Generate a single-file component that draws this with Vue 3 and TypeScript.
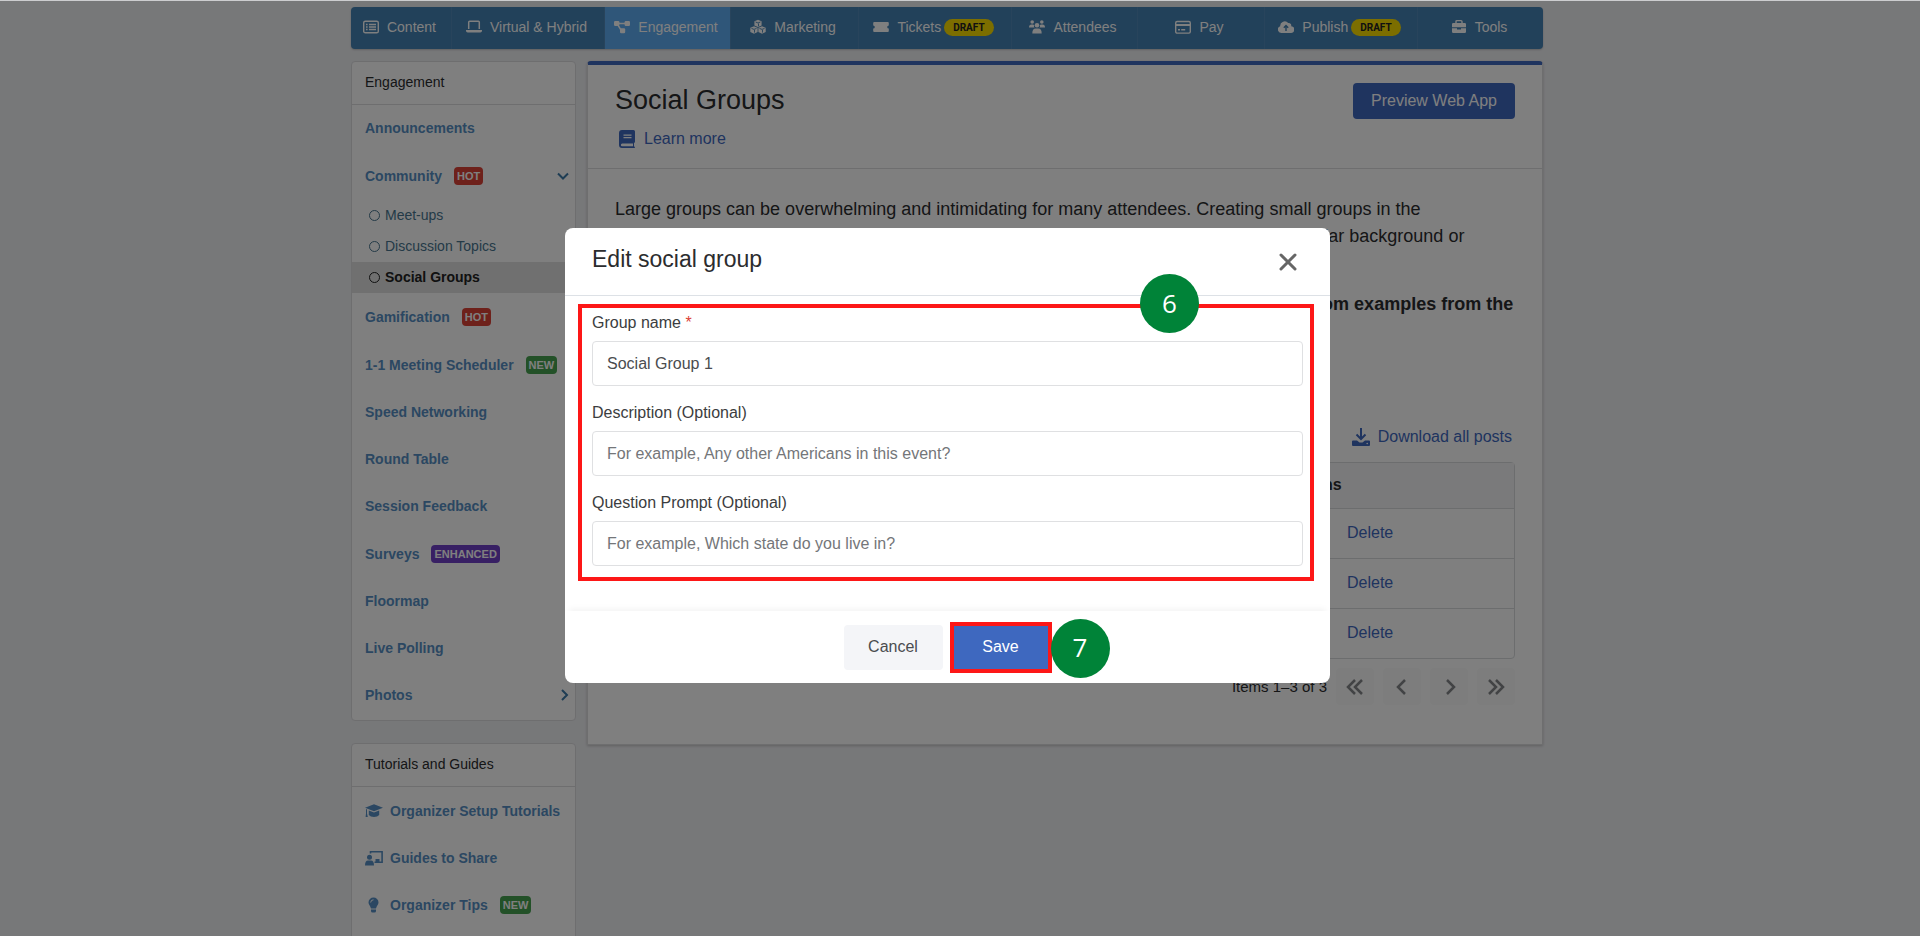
<script setup lang="ts">
import { ref } from 'vue'

interface NavItem { label: string; icon: string; draft?: boolean; active?: boolean }
interface Badge { text: string; kind: string }
interface SideItem { label: string; badge?: Badge; chevron?: 'down' | 'right'; children?: { label: string; active?: boolean }[] }

const nav: NavItem[] = [
  { label: 'Content', icon: 'list' },
  { label: 'Virtual & Hybrid', icon: 'laptop' },
  { label: 'Engagement', icon: 'nodes', active: true },
  { label: 'Marketing', icon: 'cubes' },
  { label: 'Tickets', icon: 'ticket', draft: true },
  { label: 'Attendees', icon: 'people' },
  { label: 'Pay', icon: 'card' },
  { label: 'Publish', icon: 'cloud', draft: true },
  { label: 'Tools', icon: 'toolbox' },
]

const side: SideItem[] = [
  { label: 'Announcements' },
  {
    label: 'Community',
    badge: { text: 'HOT', kind: 'hot' },
    chevron: 'down',
    children: [{ label: 'Meet-ups' }, { label: 'Discussion Topics' }, { label: 'Social Groups', active: true }],
  },
  { label: 'Gamification', badge: { text: 'HOT', kind: 'hot' } },
  { label: '1-1 Meeting Scheduler', badge: { text: 'NEW', kind: 'new' } },
  { label: 'Speed Networking' },
  { label: 'Round Table' },
  { label: 'Session Feedback' },
  { label: 'Surveys', badge: { text: 'ENHANCED', kind: 'enhanced' } },
  { label: 'Floormap' },
  { label: 'Live Polling' },
  { label: 'Photos', chevron: 'right' },
]

const guides = [
  { label: 'Organizer Setup Tutorials', icon: 'cap' },
  { label: 'Guides to Share', icon: 'board' },
  { label: 'Organizer Tips', icon: 'bulb', isNew: true },
]

const groups = ['Social Group 1', 'Social Group 2', 'Social Group 3']
const pages = [
  { name: 'First page', d: 'M9 2 2 9l7 7M16 2 9 9l7 7' },
  { name: 'Previous page', d: 'M12 2 5 9l7 7' },
  { name: 'Next page', d: 'M7 2l7 7-7 7' },
  { name: 'Last page', d: 'M2 2l7 7-7 7M9 2l7 7-7 7' },
]

const groupName = ref('Social Group 1')
const description = ref('')
const prompt = ref('')
</script>

<template>
  <div class="page">
    <div class="container">
      <nav class="topnav">
        <a v-for="n in nav" :key="n.label" href="#" :class="{ active: n.active }">
          <svg class="nav-icon" viewBox="0 0 16 16" aria-hidden="true">
            <g v-if="n.icon === 'list'" fill="none" stroke="currentColor" stroke-width="1.4">
              <rect x=".7" y="2.2" width="14.6" height="11.6" rx="1.6" />
              <path d="M6 5.5h7M6 8h7M6 10.5h7M3 5.5h1.6M3 8h1.6M3 10.5h1.6" />
            </g>
            <g v-else-if="n.icon === 'laptop'">
              <path d="M2.7 10V3.2q0-.9.9-.9h8.8q.9 0 .9.9V10" fill="none" stroke="currentColor" stroke-width="1.5" />
              <path d="M0 11h16v.8q0 1.7-1.7 1.7H1.7Q0 13.5 0 11.8z" fill="currentColor" />
            </g>
            <g v-else-if="n.icon === 'nodes'" fill="currentColor">
              <rect x="0" y="2" width="5.4" height="5" rx="1.2" />
              <rect x="10.6" y="2" width="5.4" height="5" rx="1.2" />
              <rect x="6" y="9.3" width="5.2" height="5" rx="1.2" />
              <path d="M5 3.7h6v1.5H5zM3.3 6.500l1.300-.7 3 4.700-1.300.7z" />
            </g>
            <g v-else-if="n.icon === 'cubes'" fill="currentColor">
              <path d="M8 .8l3.6 1.5v4.2L8 8.100 4.400 6.500V2.300zM4 7.200l3.600 1.500v4.400L4 14.700.3 13.100V8.700zM12 7.200l3.700 1.500v4.400L12 14.700l-3.600-1.600V8.700z" />
              <path d="M5.600 3l2.400 1 2.400-1M1.500 9.400L4 10.400l2.500-1M9.500 9.400l2.500 1 2.500-1M8.500 4.500v2.700M4.500 11v2.600M12.500 11v2.600" fill="none" stroke="#4482b4" stroke-width=".9" />
            </g>
            <path v-else-if="n.icon === 'ticket'" fill="currentColor" d="M1.200 3h13.600q1 0 1 1v2.400a1.600 1.600 0 0 0 0 3.200V12q0 1-1 1H1.200q-1 0-1-1V9.600a1.600 1.600 0 0 0 0-3.200V4q0-1 1-1z" />
            <g v-else-if="n.icon === 'people'" fill="currentColor">
              <circle cx="3.200" cy="3" r="1.800" /><circle cx="12.800" cy="3" r="1.800" /><circle cx="8" cy="6.200" r="2.300" />
              <path d="M0 8.600q0-3 2.500-3h1.300q1 0 1.200.6-.3 1.600.6 2.400zM16 8.600q0-3-2.500-3h-1.300q-1 0-1.200.6.3 1.600-.6 2.400zM3.300 14.400q0-4.900 3.400-4.900h2.600q3.400 0 3.400 4.900z" />
            </g>
            <g v-else-if="n.icon === 'card'" fill="none" stroke="currentColor">
              <rect x=".7" y="2.500" width="14.600" height="11.600" rx="1.400" stroke-width="1.400" />
              <path d="M1 6h14" stroke-width="2" /><path d="M3 10.700h2M6.200 10.700h4" stroke-width="1.400" />
            </g>
            <g v-else-if="n.icon === 'cloud'">
              <path fill="currentColor" d="M3.500 14A3.500 3.500 0 0 1 2.200 7.200 4.500 4.500 0 0 1 10.200 4a2.600 2.600 0 0 1 3 3.200A3.400 3.400 0 0 1 12.600 14z" />
              <path d="M8 12V7M5.800 8.800L8 6.600l2.200 2.200" fill="none" stroke="#4482b4" stroke-width="1.400" />
            </g>
            <g v-else>
              <path d="M5 4.200V2.600q0-1 1-1h4q1 0 1 1v1.600" fill="none" stroke="currentColor" stroke-width="1.400" />
              <path fill="currentColor" d="M2.300 4h11.400q1.300 0 1.300 1.300v3H1v-3Q1 4 2.300 4zM1 9.300h5v1.200h4V9.300h5v3.400q0 1.300-1.300 1.300H2.300Q1 14 1 12.700z" />
            </g>
          </svg>
          <span>{{ n.label }}</span>
          <span v-if="n.draft" class="draft">DRAFT</span>
        </a>
      </nav>

      <div class="columns">
        <aside>
          <section class="card">
            <h2>Engagement</h2>
            <ul>
              <li v-for="s in side" :key="s.label">
                <a href="#" class="row" :class="{ tall: s.badge }">
                  <span>{{ s.label }}</span>
                  <span v-if="s.badge" class="badge" :class="s.badge.kind">{{ s.badge.text }}</span>
                  <svg v-if="s.chevron" class="chevron" viewBox="0 0 12 12" aria-hidden="true">
                    <path :d="s.chevron === 'down' ? 'M1 3.500l5 5 5-5' : 'M5 1l5 5-5 5'" />
                  </svg>
                </a>
                <ul v-if="s.children">
                  <li v-for="c in s.children" :key="c.label">
                    <a href="#" class="sub" :class="{ current: c.active }"><i class="ring"></i>{{ c.label }}</a>
                  </li>
                </ul>
              </li>
            </ul>
          </section>

          <section class="card guides">
            <h2>Tutorials and Guides</h2>
            <ul>
              <li v-for="g in guides" :key="g.label">
                <a href="#" class="row guide">
                  <svg class="guide-icon" viewBox="0 0 18 16" aria-hidden="true">
                    <g v-if="g.icon === 'cap'" fill="currentColor">
                      <path d="M9 1.200l9 3.500-9 3.500-9-3.500zM3.800 7.500L9 9.500l5.200-2V12q-1.600 2-5.200 2t-5.200-2zM1 6l1 .4v4l.8 3.600H.6L1 10.500z" />
                    </g>
                    <g v-else-if="g.icon === 'board'">
                      <circle cx="4.500" cy="7.200" r="2.500" fill="currentColor" />
                      <path d="M0 15.500q0-5 3-5h3q3 0 3 5z" fill="currentColor" />
                      <path d="M5.500 3.500V1.700h11.600v10.600H9.500" fill="none" stroke="currentColor" stroke-width="1.600" />
                      <path d="M10.500 9h4v3h-4z" fill="currentColor" />
                    </g>
                    <g v-else>
                      <path d="M8.500.5a5 5 0 0 1 5 5c0 2.500-1.900 3-2.500 6H6c-.6-3-2.500-3.500-2.500-6a5 5 0 0 1 5-5zM6 12.500h5V14q0 1.500-1.500 1.500h-2Q6 15.500 6 14z" fill="currentColor" />
                      <path d="M5.700 5.500A2.800 2.800 0 0 1 8.500 2.800" fill="none" stroke="#fff" />
                    </g>
                  </svg>
                  <span>{{ g.label }}</span>
                  <span v-if="g.isNew" class="badge new">NEW</span>
                </a>
              </li>
            </ul>
          </section>
        </aside>

        <main>
          <header class="main-head">
            <div>
              <h1>Social Groups</h1>
              <a href="#" class="learn">
                <svg viewBox="0 0 16 18" aria-hidden="true">
                  <path fill="currentColor" d="M3 0h11.500Q16 0 16 1.500v10q0 1.200-1 1.500v3.500q1 0 1 .8t-1 .7H3q-3 0-3-3V3q0-3 3-3z" />
                  <path fill="#fff" d="M4.500 4.500h8v1.200h-8zM4.500 7h8v1.200h-8zM3.200 13.500H14v2.700H3.200q-1.300 0-1.300-1.300t1.300-1.400z" />
                </svg>
                Learn more
              </a>
            </div>
            <button type="button" class="primary preview">Preview Web App</button>
          </header>

          <div class="content">
            <p>
              Large groups can be overwhelming and intimidating for many attendees. Creating small groups in the<br />
              Community section will help your attendees much more easily connect with others of similar background or<br />
              common interests.
            </p>
            <p class="strong">Create your own new social groups for attendees to join, or get some inspiration from examples from the</p>
            <div class="download">
              <a href="#">
                <svg viewBox="0 0 18 18" aria-hidden="true">
                  <path d="M9 0v10M4.500 6.500L9 11l4.500-4.500" fill="none" stroke="currentColor" stroke-width="2" />
                  <path fill="currentColor" d="M1 12.500h4l2.500 2h3l2.500-2h4q1 0 1 1V17q0 1-1 1H1q-1 0-1-1v-3.500q0-1 1-1z" />
                  <circle cx="15.200" cy="15.500" r=".8" fill="#fff" />
                </svg>
                Download all posts
              </a>
            </div>
            <table>
              <thead>
                <tr><th>Group name</th><th>Posts</th><th class="actions">Actions</th></tr>
              </thead>
              <tbody>
                <tr v-for="g in groups" :key="g">
                  <td>{{ g }}</td><td>0</td>
                  <td class="actions"><a href="#">Edit</a><a href="#">Delete</a></td>
                </tr>
              </tbody>
            </table>
            <div class="pager">
              <span>Items 1–3 of 3</span>
              <button v-for="p in pages" :key="p.name" type="button" :aria-label="p.name">
                <svg viewBox="0 0 18 18" aria-hidden="true"><path :d="p.d" /></svg>
              </button>
            </div>
          </div>
        </main>
      </div>
    </div>

    <div class="overlay">
      <form class="modal" role="dialog" aria-labelledby="dialog-title" @submit.prevent>
        <header class="modal-head">
          <h2 id="dialog-title">Edit social group</h2>
          <button type="button" class="close" aria-label="Close">
            <svg viewBox="0 0 18 18" aria-hidden="true"><path d="M2 2l14 14M16 2L2 16" /></svg>
          </button>
        </header>
        <div class="fields">
          <label for="group-name">Group name <span class="required">*</span></label>
          <input id="group-name" v-model="groupName" type="text" />
          <label for="description">Description (Optional)</label>
          <input id="description" v-model="description" type="text" placeholder="For example, Any other Americans in this event?" />
          <label for="prompt">Question Prompt (Optional)</label>
          <input id="prompt" v-model="prompt" type="text" placeholder="For example, Which state do you live in?" />
          <span class="step six">6</span>
        </div>
        <footer class="modal-foot">
          <button type="button" class="cancel">Cancel</button>
          <div class="save-wrap">
            <button type="submit" class="save">Save</button>
            <span class="step seven">7</span>
          </div>
        </footer>
      </form>
    </div>
  </div>
</template>

<style>
body {
  margin: 0;
  background: #eff0f3;
}
</style>

<style scoped>
* {
  box-sizing: border-box;
}
.page {
  height: 100vh;
  overflow: hidden;
  padding: 7px 26px 0 0;
  background: #eff0f3;
  color: #2b2c2e;
  font-family: "Liberation Sans", Arial, sans-serif;
  font-size: 16px;
}
a {
  text-decoration: none;
  color: #3e68bf;
}
button,
input {
  font: inherit;
}
button {
  border: 0;
  padding: 0;
}
h1,
h2,
p,
ul {
  margin: 0;
  padding: 0;
  font-weight: 400;
  list-style: none;
}
.container {
  max-width: 1192px;
  margin: 0 auto;
}
.topnav {
  display: grid;
  grid-template-columns: 100fr 153fr 126fr 128fr 153fr 126fr 127fr 153fr 126fr;
  height: 42px;
  border-radius: 4px;
  overflow: hidden;
  background: #4482b4;
  box-shadow: 0 1px 2px rgba(0, 0, 0, 0.2);
}
.topnav a {
  display: flex;
  align-items: center;
  justify-content: center;
  padding: 0 3px 2px 0;
  color: #fff;
  font-size: 14px;
  white-space: nowrap;
}
.topnav a + a {
  border-left: 1px solid #5089b9;
}
.topnav a.active {
  background: #5eacf2;
}
.nav-icon {
  width: 16px;
  height: 16px;
  margin-right: 8px;
}
.draft {
  margin-left: 3px;
  padding: 0 9px;
  border-radius: 9px;
  background: #f8dc00;
  color: #222;
  font-family: Roboto, sans-serif;
  font-size: 10px;
  font-weight: 700;
  line-height: 17px;
}
.columns {
  display: grid;
  grid-template-columns: 225px minmax(0, 1fr);
  gap: 11px;
  align-items: start;
  margin-top: 12px;
}
.card {
  margin-bottom: 22px;
  padding-bottom: 1px;
  border: 1px solid #dcdcdf;
  border-radius: 4px;
  background: #fff;
}
.guides {
  padding-bottom: 47px;
}
.card h2 {
  height: 43px;
  padding: 0 13px;
  border-bottom: 1px solid #dcdcdf;
  font-size: 14px;
  line-height: 41px;
}
.row {
  display: flex;
  align-items: center;
  height: 47px;
  padding: 0 6px 2px 13px;
  color: #578fc4;
  font-size: 14px;
  font-weight: 700;
  white-space: nowrap;
}
.row.tall {
  height: 48px;
  padding-bottom: 0;
}
.row.guide {
  padding-bottom: 0;
}
.badge {
  margin-left: 12px;
  padding: 0 3px;
  border-radius: 4px;
  color: #fff;
  font-size: 11px;
  line-height: 18px;
}
.hot {
  background: #dc4236;
}
.new {
  background: #47a350;
}
.enhanced {
  background: #7141c8;
}
.chevron {
  width: 12px;
  height: 12px;
  margin-left: auto;
  fill: none;
  stroke: #3d7aa8;
  stroke-width: 2;
}
.sub {
  display: flex;
  align-items: center;
  height: 31px;
  padding: 0 17px 1px;
  color: #48758f;
  font-size: 14px;
}
.sub.current {
  background: #e0e1e1;
  color: #222;
  font-weight: 700;
}
.ring {
  width: 11px;
  height: 11px;
  margin-right: 5px;
  border: 1px solid currentColor;
  border-radius: 50%;
}
.guide-icon {
  width: 18px;
  height: 16px;
  margin-right: 7px;
}
main {
  min-width: 0;
  padding-bottom: 39px;
  border: 1px solid #dcdcdf;
  border-top: 4px solid #3e68bf;
  border-radius: 4px 4px 0 0;
  background: #fff;
  box-shadow: 0 1px 3px rgba(0, 0, 0, 0.2);
}
.main-head {
  display: flex;
  justify-content: space-between;
  align-items: flex-start;
  height: 104px;
  padding: 18px 27px 0;
  border-bottom: 1px solid #dcdcdf;
}
h1 {
  font-size: 27px;
  line-height: 34px;
}
.learn {
  display: flex;
  align-items: center;
  margin-top: 12px;
  padding-left: 4px;
  line-height: 20px;
}
.learn svg {
  width: 16px;
  height: 18px;
  margin-right: 9px;
}
.primary {
  border-radius: 4px;
  background: #3e68bf;
  color: #fff;
}
.preview {
  width: 162px;
  height: 36px;
}
.content {
  padding: 27px 27px 0;
}
.content p {
  font-size: 18px;
  line-height: 27px;
  white-space: nowrap;
}
.content .strong {
  margin-top: 14px;
  font-weight: 700;
}
.download {
  display: flex;
  justify-content: flex-end;
  margin-top: 107px;
  padding-right: 3px;
}
.download a {
  display: flex;
  align-items: center;
  line-height: 24px;
}
.download svg {
  width: 18px;
  height: 18px;
  margin-right: 8px;
}
table {
  width: 100%;
  margin-top: 13px;
  border: 1px solid #d8dadd;
  border-radius: 4px;
  border-spacing: 0;
}
th,
td {
  height: 50px;
  padding: 0 16px 2px;
  border-top: 1px solid #d8dadd;
  text-align: left;
}
th {
  height: 45px;
  border-top: 0;
  background: #f4f5f7;
}
.actions {
  width: 247px;
}
.actions a {
  display: inline-block;
  min-width: 64px;
}
.pager {
  display: flex;
  align-items: center;
  justify-content: flex-end;
  gap: 9px;
  margin-top: 9px;
  font-size: 15px;
}
.pager button {
  display: grid;
  place-items: center;
  width: 38px;
  height: 37px;
  border-radius: 4px;
  background: #fafbfa;
}
.pager svg {
  width: 18px;
  height: 18px;
  fill: none;
  stroke: #85878a;
  stroke-width: 2.5;
}
.overlay {
  position: fixed;
  inset: 0;
  display: flex;
  justify-content: center;
  align-items: flex-start;
  padding: 227px 25px 0 0;
  border-top: 1px solid #cccdcf;
  background: rgba(0, 0, 0, 0.5);
}
.modal {
  width: 100%;
  max-width: 765px;
  border-radius: 8px;
  background: #fff;
  color: #3b3d40;
}
.modal-head {
  display: flex;
  align-items: center;
  justify-content: space-between;
  height: 68px;
  padding: 0 33px 4px 27px;
  border-bottom: 1px solid #dde1e6;
}
.modal-head h2 {
  color: #2b2c2e;
  font-size: 23px;
}
.close {
  display: grid;
  margin-top: 4px;
  background: none;
}
.close svg {
  width: 18px;
  height: 18px;
  fill: none;
  stroke: #666;
  stroke-width: 3;
  stroke-linecap: round;
}
.fields {
  position: relative;
  display: flex;
  flex-direction: column;
  margin: 8px 16px 0 13px;
  padding: 3px 7px 11px 10px;
  border: 4px solid #fd1717;
}
.fields label {
  height: 30px;
  line-height: 24px;
}
.required {
  color: #dc4136;
}
.fields input {
  width: 100%;
  height: 45px;
  margin-bottom: 15px;
  padding: 0 14px;
  border: 1px solid #dfe0e2;
  border-radius: 4px;
  background: #fff;
  color: #4a4c4f;
  outline: 0;
}
.fields input:last-of-type {
  margin-bottom: 0;
}
.fields input::placeholder {
  color: #747679;
  opacity: 1;
}
.modal-foot {
  display: flex;
  justify-content: center;
  align-items: center;
  gap: 7px;
  height: 72px;
  margin-top: 30px;
  border-radius: 0 0 8px 8px;
  box-shadow: 0 -6px 6px -4px rgba(0, 0, 0, 0.05);
}
.cancel {
  width: 99px;
  height: 45px;
  border-radius: 4px;
  background: #f4f5f8;
  color: #4a4c4f;
}
.save-wrap {
  position: relative;
}
.save {
  display: block;
  width: 102px;
  height: 51px;
  border: 4px solid #fd1717;
  background: #3e68bf;
  color: #fff;
}
.step {
  position: absolute;
  display: grid;
  place-items: center;
  width: 59px;
  height: 59px;
  padding-bottom: 2px;
  border-radius: 50%;
  background: #008338;
  color: #fff;
  font-family: "Open Sans", "Noto Sans", sans-serif;
  font-size: 26px;
}
.six {
  top: -34px;
  right: 111px;
}
.seven {
  top: -3px;
  left: 101px;
}
</style>
